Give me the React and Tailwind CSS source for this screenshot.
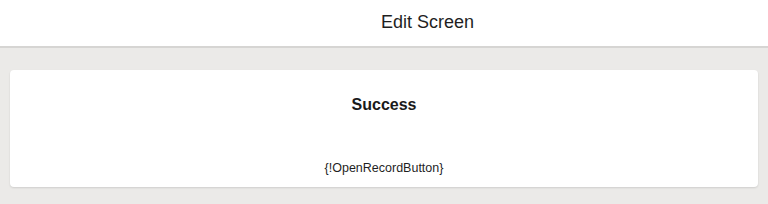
export default function App() {
  return (
    <div className="w-[768px] h-[204px] bg-[#ebeae8] flex flex-col" style={{ fontFamily: '"Liberation Sans", Arial, sans-serif' }}>
      <div className="h-[48px] bg-white border-b-2 border-[#d6d5d3] flex items-center justify-center pl-[87px] pb-[2px] shrink-0">
        <span className="text-[18px] leading-[22px] text-[#1f1f1f]">Edit Screen</span>
      </div>
      <div className="px-[10px] pt-[22px]">
        <div className="h-[117px] bg-white rounded-[4px] shadow-[0_1px_2px_rgba(0,0,0,0.12)] flex flex-col items-center pt-[25px]">
          <div className="text-[16px] leading-[20px] font-bold text-[#1a1a1a]">Success</div>
          <div className="mt-[45px] text-[12.5px] leading-[16px] text-[#1f1f1f]">{"{!OpenRecordButton}"}</div>
        </div>
      </div>
    </div>
  );
}
